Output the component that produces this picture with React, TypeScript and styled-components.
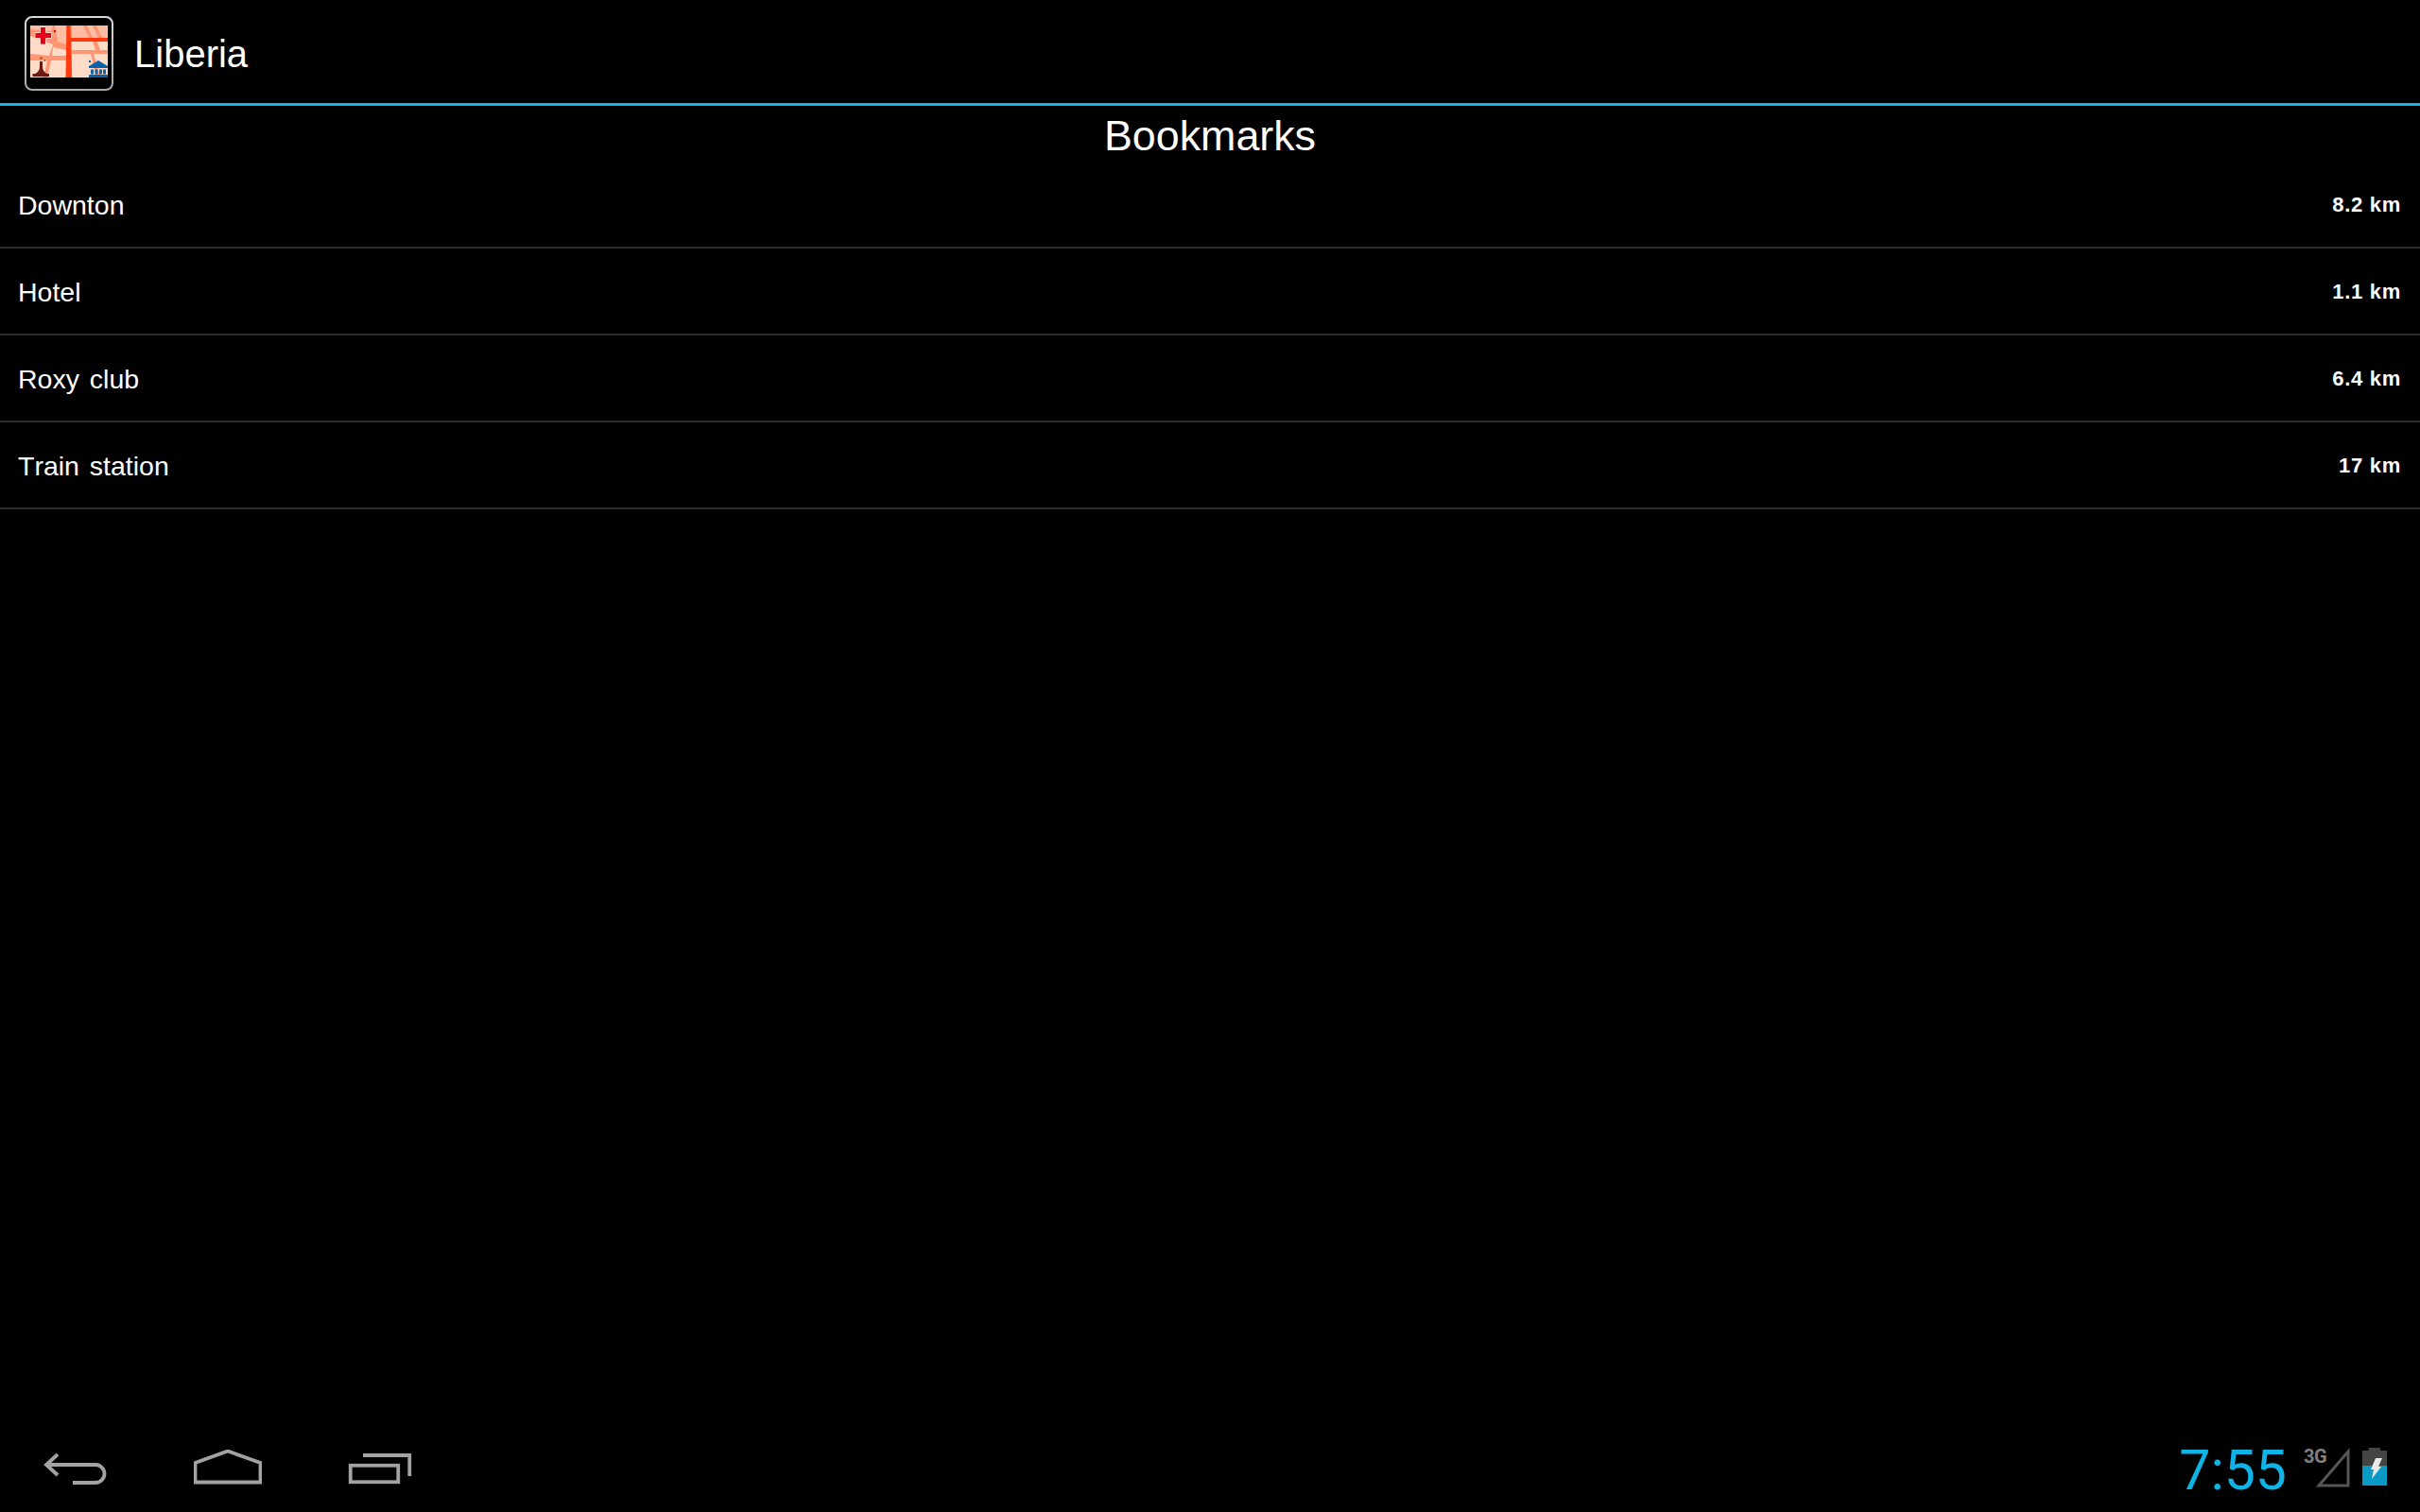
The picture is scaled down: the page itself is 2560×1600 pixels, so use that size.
import React from "react";
import styled, { createGlobalStyle } from "styled-components";

const Global = createGlobalStyle`
  html, body {
    margin: 0;
    padding: 0;
    background: #000;
  }
`;

const Screen = styled.div`
  width: 2560px;
  height: 1600px;
  display: flex;
  flex-direction: column;
  background: #000;
  color: #fff;
  font-family: "Liberation Sans", Arial, sans-serif;
  overflow: hidden;
`;

const ActionBar = styled.header`
  height: 112px;
  flex: none;
  display: flex;
  align-items: center;
  gap: 20px;
  padding: 4px 0 0 26px;
  box-sizing: border-box;
  border-bottom: 3px solid #0fb4e6;
`;

const AppTitle = styled.span`
  font-size: 40px;
  line-height: 46px;
`;

const Heading = styled.h1`
  margin: 0;
  height: 59px;
  font-size: 44.8px;
  font-weight: 400;
  line-height: 63px;
  text-align: center;
`;

const List = styled.ul`
  margin: 0;
  padding: 0;
  list-style: none;
`;

const Row = styled.li`
  height: 92px;
  box-sizing: border-box;
  display: flex;
  align-items: center;
  justify-content: space-between;
  padding: 2px 20px 0 19px;
  border-bottom: 2px solid #2e2e2e;
`;

const Name = styled.span`
  font-size: 28.5px;
  font-kerning: none;
  word-spacing: 3px;
`;

const Distance = styled.span`
  font-size: 22px;
  font-weight: 700;
  letter-spacing: 0.7px;
`;

const NavBar = styled.footer`
  margin-top: auto;
  height: 96px;
  flex: none;
  display: flex;
  align-items: flex-start;
  justify-content: space-between;
  padding: 0 34px 0 44px;
  box-sizing: border-box;
`;

const NavButtons = styled.nav`
  display: flex;
  align-items: flex-start;
  gap: 89px;
  padding-top: 30px;
`;

const Status = styled.div`
  display: flex;
  align-items: flex-start;
  gap: 15px;
`;

const Clock = styled.span`
  font-family: Roboto, sans-serif;
  font-weight: 400;
  font-size: 59px;
  line-height: 104px;
  color: #0fb4e6;
`;

const Signal = styled.div`
  position: relative;
  width: 49px;
  height: 96px;
`;

const NetworkType = styled.span`
  position: absolute;
  left: 3px;
  top: 25px;
  font-family: Roboto, sans-serif;
  font-weight: 700;
  font-size: 20px;
  line-height: 24px;
  letter-spacing: -0.5px;
  color: #808080;
`;

const SignalIcon = styled.svg`
  position: absolute;
  left: 14px;
  top: 26px;
`;

const BatteryIcon = styled.svg`
  margin-top: 27px;
`;

const AppIcon = () => (
  <svg width="96" height="80" viewBox="0 0 96 80">
    <defs>
      <linearGradient id="frame" x1="0" y1="0" x2="0" y2="1">
        <stop offset="0" stopColor="#d8d8d8" />
        <stop offset="1" stopColor="#a8a8a8" />
      </linearGradient>
    </defs>
    <rect x="1" y="1" width="92" height="77" rx="7" fill="#000" stroke="url(#frame)" strokeWidth="2" />
    <rect x="6" y="10" width="82" height="55" fill="#ff9673" />
    <g fill="#ffbda4">
      <polygon points="6,10 30,10 28,16 6,14" />
      <polygon points="32,10 44,10 44,30 35,27" />
      <polygon points="50,10 62,10 68,23 50,23" />
      <polygon points="66,10 72,10 78,23 72,23" />
      <polygon points="76,10 88,10 88,23 82,23" />
    </g>
    <g fill="#ffdcc8">
      <polygon points="6,21 30,30 26,42 6,40" />
      <polygon points="30,33 44,36 44,42 29,42" />
      <polygon points="6,47 24,47 20,65 6,65" />
      <polygon points="28,47 44,47 44,65 24,65" />
      <polygon points="50,27 72,27 75,36 50,36" />
      <polygon points="77,27 88,27 88,36 80,36" />
      <polygon points="50,40 70,40 76,65 50,65" />
      <polygon points="73,40 88,40 88,65 80,65" />
    </g>
    <polygon points="44.5,10 48.5,10 50,65 43.5,65" fill="#ff3a10" />
    <rect x="48" y="23" width="40" height="4" fill="#ff3a10" />
    <path d="M11 17.5 h5.5 v-6 h6 v6 h6 v6 h-6 v6.5 h-6 v-6.5 h-5.5 Z" fill="#e6001a" stroke="#ffe3d8" strokeWidth="0.8" />
    <circle cx="32" cy="16" r="1.2" fill="#e6001a" />
    <path d="M8.5 64 v-3 h3 q4.5 -2.5 4.5 -8 v-5 h3 v5 q0 5.5 4.5 8 h2.5 v3 Z" fill="#6a1a10" />
    <circle cx="17.5" cy="44.5" r="1.2" fill="#c0401c" />
    <circle cx="21.5" cy="47" r="1" fill="#c0401c" />
    <g fill="#0a62aa">
      <path d="M68 53 L78 47 L88 53 V55 H68 Z" />
      <rect x="70" y="56.5" width="3" height="5" />
      <rect x="74.5" y="56.5" width="3" height="5" />
      <rect x="79" y="56.5" width="3" height="5" />
      <rect x="83" y="56.5" width="3" height="5" />
      <rect x="68" y="62" width="20" height="3" />
      <circle cx="69" cy="48" r="1.2" />
    </g>
  </svg>
);

const BackIcon = () => (
  <svg width="72" height="38" viewBox="0 0 72 38" fill="none" stroke="#a2a4a2" strokeWidth="3.8">
    <path d="M17 5 L5 16 L17 27" />
    <path d="M5 16 H57 A9.5 9.5 0 0 1 57 35 H33" />
  </svg>
);

const HomeIcon = () => (
  <svg width="72" height="38" viewBox="0 0 72 38" fill="none" stroke="#a2a4a2" strokeWidth="3.8">
    <path d="M1.5 34.5 V14 L36 1.5 L70.5 14 V34.5 Z" />
  </svg>
);

const RecentsIcon = () => (
  <svg width="72" height="38" viewBox="0 0 72 38" fill="none" stroke="#a2a4a2" strokeWidth="3.8">
    <rect x="4.75" y="16.75" width="50.5" height="17.5" />
    <path d="M18 6 H67.25 V28" />
  </svg>
);

const Bolt = () => <path d="M15 12 H22 L18 21 H21 L11 34 L13 24 H10 Z" fill="#e8e8e8" />;

const rows = [
  { name: "Downton", distance: "8.2 km" },
  { name: "Hotel", distance: "1.1 km" },
  { name: "Roxy club", distance: "6.4 km" },
  { name: "Train station", distance: "17 km" },
];

export default function App() {
  return (
    <Screen>
      <Global />
      <ActionBar>
        <AppIcon />
        <AppTitle>Liberia</AppTitle>
      </ActionBar>
      <Heading>Bookmarks</Heading>
      <List>
        {rows.map((row) => (
          <Row key={row.name}>
            <Name>{row.name}</Name>
            <Distance>{row.distance}</Distance>
          </Row>
        ))}
      </List>
      <NavBar>
        <NavButtons>
          <BackIcon />
          <HomeIcon />
          <RecentsIcon />
        </NavButtons>
        <Status>
          <Clock>7:55</Clock>
          <Signal>
            <NetworkType>3G</NetworkType>
            <SignalIcon width="40" height="48" viewBox="0 0 40 48" fill="none">
              <path d="M36 6 V42 H5 Z" stroke="#555" strokeWidth="3" />
            </SignalIcon>
          </Signal>
          <BatteryIcon width="28" height="42" viewBox="0 0 28 42">
            <rect x="7.7" y="1" width="12.3" height="4" fill="#444" />
            <rect x="1" y="4" width="26" height="16" fill="#444" />
            <rect x="1" y="20" width="26" height="21" fill="#0a9ac6" />
            <Bolt />
          </BatteryIcon>
        </Status>
      </NavBar>
    </Screen>
  );
}
